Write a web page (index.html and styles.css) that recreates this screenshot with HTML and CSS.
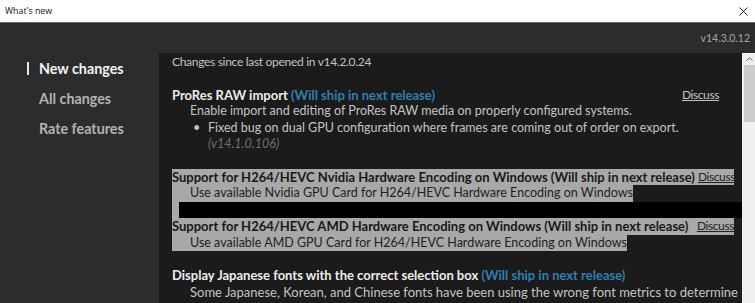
FILE: index.html
```html
<!DOCTYPE html>
<html>
<head>
<meta charset="utf-8">
<link rel="stylesheet" href="styles.css">
</head>
<body>
<div class="titlebar">
  <span class="title">What's new</span>
  <svg class="close" width="9" height="9" viewBox="0 0 9 9"><path d="M0.5 0.5 L8.5 8.5 M8.5 0.5 L0.5 8.5" stroke="#111" stroke-width="0.9" fill="none"/></svg>
</div>
<div class="header"><span class="version">v14.3.0.12</span></div>
<div class="main">
  <nav class="sidebar">
    <div class="nav-item active"><span class="marker"></span>New changes</div>
    <div class="nav-item">All changes</div>
    <div class="nav-item">Rate features</div>
  </nav>
  <div class="content">
    <div class="scrollarea">
      <div class="since">Changes since last opened in v14.2.0.24</div>
      <div class="item">
        <div class="item-title first"><span>ProRes RAW import <span class="ship">(Will ship in next release)</span></span><span class="discuss">Discuss</span></div>
        <div class="desc">Enable import and editing of ProRes RAW media on properly configured systems.</div>
        <div class="bullet-row"><span class="dot">•</span>Fixed bug on dual GPU configuration where frames are coming out of order on export.</div>
        <div class="ver">(v14.1.0.106)</div>
      </div>
      <div class="item sel">
        <div class="item-title"><span>Support for H264/HEVC Nvidia Hardware Encoding on Windows (Will ship in next release)</span><span class="discuss">Discuss</span></div>
        <div class="desc">Use available Nvidia GPU Card for H264/HEVC Hardware Encoding on Windows</div>
        <div class="sel-gap"><span class="gap-grey"></span><span class="gap-black"></span></div>
      </div>
      <div class="item sel flush">
        <div class="item-title"><span>Support for H264/HEVC AMD Hardware Encoding on Windows (Will ship in next release)</span><span class="discuss">Discuss</span></div>
        <div class="desc">Use available AMD GPU Card for H264/HEVC Hardware Encoding on Windows</div>
      </div>
      <div class="item">
        <div class="item-title"><span>Display Japanese fonts with the correct selection box <span class="ship">(Will ship in next release)</span></span></div>
        <div class="desc wide">Some Japanese, Korean, and Chinese fonts have been using the wrong font metrics to determine</div>
      </div>
    </div>
    <div class="scrollbar">
      <div class="arrow"><svg width="7" height="4" viewBox="0 0 7 4"><path d="M0.5 3.5 L3.5 0.7 L6.5 3.5" stroke="#606060" stroke-width="1" fill="none"/></svg></div>
      <div class="thumb"></div>
    </div>
  </div>
</div>
</body>
</html>
```
FILE: styles.css
```css
html, body {
  margin: 0;
  padding: 0;
}
body {
  width: 755px;
  height: 303px;
  overflow: hidden;
  background: #2c2c2c;
  font-family: Lato, "Open Sans", sans-serif;
}
.titlebar {
  height: 22px;
  background: #ffffff;
  border-bottom: 1px solid #6a6a6a;
  display: flex;
  align-items: center;
  justify-content: space-between;
  padding: 0 7px 0 5px;
}
.title {
  font-family: "Open Sans", sans-serif;
  font-size: 8.8px;
  color: #111;
}
.close {
  display: block;
}
.header {
  height: 30px;
  display: flex;
  align-items: center;
  justify-content: flex-end;
  padding-right: 5px;
  background: #2c2c2c;
}
.version {
  color: #a6a6a6;
  font-size: 10.5px;
}
.main {
  display: flex;
  height: 250px;
}
.sidebar {
  width: 159px;
  flex: none;
  background: #2c2c2c;
}
.nav-item {
  height: 30px;
  display: flex;
  align-items: center;
  padding-left: 39px;
  font-size: 14.3px;
  font-weight: bold;
  color: #b3b3b3;
}
.nav-item.active {
  padding-left: 27px;
  color: #f4f4f4;
}
.marker {
  width: 2px;
  height: 13px;
  background: #e8e8e8;
  margin-right: 10px;
}
.content {
  flex: 1;
  display: flex;
  background: #1b1b1b;
  min-width: 0;
}
.scrollarea {
  flex: 1;
  min-width: 0;
  overflow: hidden;
  padding: 1px 4px 0 13px;
  font-size: 12.5px;
  line-height: 16.5px;
  color: #c4c4c4;
  white-space: nowrap;
}
.since {
  font-size: 12px;
  letter-spacing: -0.3px;
}
.item {
  margin-top: 16px;
}
.item.flush {
  margin-top: 0;
}
.item-title {
  display: flex;
  justify-content: space-between;
  gap: 3px;
  font-size: 13px;
  font-weight: bold;
  color: #ededed;
  margin-right: 4px;
}
.ship {
  color: #2e80b0;
}
.discuss {
  flex: none;
  font-size: 12px;
  letter-spacing: -0.4px;
  font-weight: normal;
  color: #c4c4c4;
  text-decoration: underline;
}
.item-title.first .discuss {
  margin-right: 15px;
}
.desc {
  padding-left: 18px;
}
.desc.wide {
  font-size: 13px;
}
.bullet-row {
  padding-left: 21px;
}
.dot {
  display: inline-block;
  width: 15px;
}
.ver {
  padding-left: 36px;
  font-style: italic;
  color: #6e6e6e;
}
.sel .item-title {
  background: #a8a8a8;
  color: #181818;
}
.sel .discuss {
  color: #222;
}
.sel .desc {
  width: fit-content;
  background: #a8a8a8;
  color: #222;
}
.sel-gap {
  display: flex;
  height: 16.5px;
  margin-right: -4px;
}
.gap-grey {
  width: 7px;
  background: #a8a8a8;
}
.gap-black {
  flex: 1;
  background: #000;
}
.scrollbar {
  width: 13px;
  flex: none;
  background: #f0f0f0;
  display: flex;
  flex-direction: column;
}
.arrow {
  height: 12px;
  display: flex;
  align-items: center;
  justify-content: center;
  padding-left: 2px;
}
.thumb {
  margin-left: 2px;
  height: 57px;
  background: #cdcdcd;
}
```
